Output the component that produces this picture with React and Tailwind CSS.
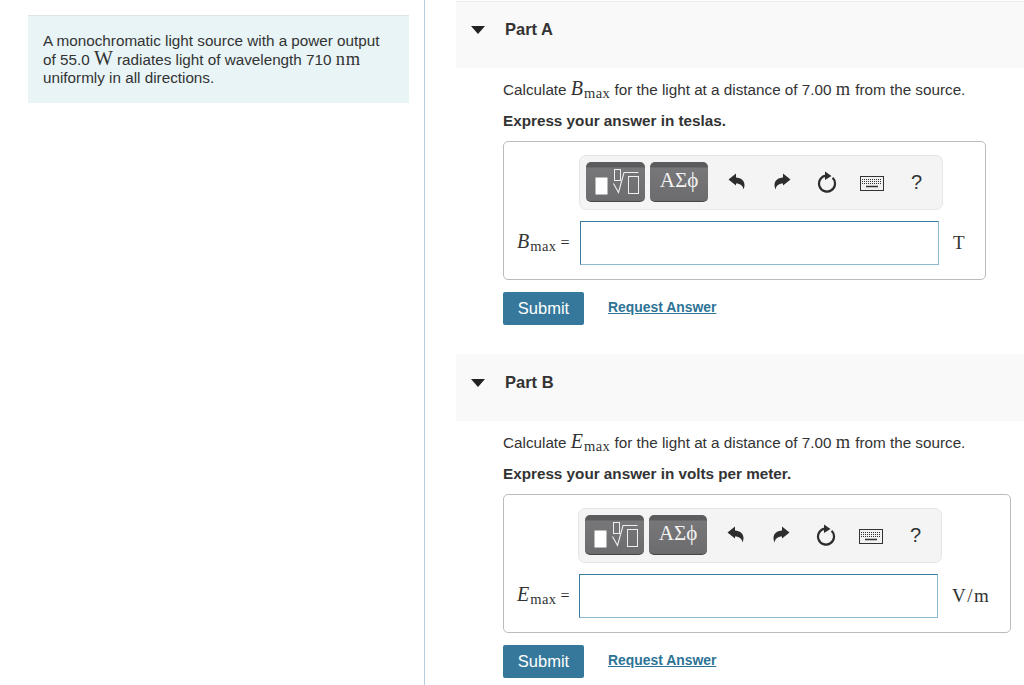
const sans = 'font-["Liberation_Sans",Arial,sans-serif]'
const serif = 'font-["Liberation_Serif",serif]'
const buttonBg = 'bg-[linear-gradient(#5c5c5e_0,#5c5c5e_5px,#77777a_6px,#6c6c6e_100%)]'

function MathVar({ letter }) {
  return (
    <span className={`${serif} whitespace-nowrap`}>
      <span className="italic text-[20px] leading-none">{letter}</span>
      <span className="text-[14.5px] leading-none tracking-[0.4px] relative top-[3px] ml-[1px]">max</span>
    </span>
  )
}

function Unit({ children }) {
  return <span className={`${serif} text-[18.5px] leading-[12px] tracking-[0.8px]`}>{children}</span>
}

function TemplatesButton() {
  return (
    <div className={`w-[59px] h-10 rounded-[5px] border-b border-[#444] ${buttonBg} flex items-center justify-center`}>
      <svg width="52" height="34" viewBox="0 0 52 34" fill="none">
        <rect x="5.5" y="12.5" width="12" height="17" fill="#fff" />
        <rect x="24.5" y="4.5" width="6" height="11" stroke="#eee" />
        <path d="M23.5 18.5l5 9 5.500-20h14.500" stroke="#eee" strokeWidth="1.100" />
        <rect x="38.5" y="11.5" width="10" height="17" stroke="#eee" />
      </svg>
    </div>
  )
}

function SymbolsButton() {
  return (
    <div className={`w-[58px] h-10 rounded-[5px] border-b border-[#444] ${buttonBg} flex items-center justify-center pb-[2px] text-[#f2f2f2] text-[21px] ${serif}`}>
      ΑΣϕ
    </div>
  )
}

function UndoIcon({ flip }) {
  return (
    <svg width="18" height="18" viewBox="0 0 18 18" className={flip ? '-scale-x-100' : ''}>
      <path d="M.5 6.500 8 .5v4c5 .3 8.500 3 8.500 7.500 0 1.500-.5 3.200-1 4.500-.5-3.500-3-6-7.500-6v2z" fill="#2d2d2d" />
    </svg>
  )
}

function ResetIcon() {
  return (
    <svg width="20" height="22" viewBox="0 0 20 22" fill="none">
      <path d="M15.600 6.800A8 8 0 1 1 9 4.600" stroke="#2d2d2d" strokeWidth="2.200" />
      <path d="M8 .5 14.500 5 8 9z" fill="#2d2d2d" />
    </svg>
  )
}

function KeyboardIcon() {
  return (
    <svg width="24" height="15" viewBox="0 0 24 15" fill="none">
      <rect x=".5" y=".5" width="23" height="14" stroke="#333" fill="#f2f2f2" />
      <path d="M2 3.500h20M2 5.500h20M2 7.500h20" stroke="#333" strokeDasharray="1 1" />
      <path d="M6 10.500h12" stroke="#333" strokeWidth="1.500" />
    </svg>
  )
}

function Toolbar() {
  return (
    <div className="w-[364px] h-[55px] rounded-[7px] bg-[#f4f4f4] border border-[#e6e6e6] flex items-center pl-[6px]">
      <div className="flex gap-[5px] mb-[1px]">
        <TemplatesButton />
        <SymbolsButton />
      </div>
      <div className="grid grid-cols-[repeat(5,45px)] justify-items-center items-center ml-[6px] mb-[1px]">
        <UndoIcon />
        <UndoIcon flip />
        <ResetIcon />
        <div className="mt-[2px]"><KeyboardIcon /></div>
        <span className={`${sans} text-[20px] text-[#333]`}>?</span>
      </div>
    </div>
  )
}

function Part({ name, letter, unit, unitText, boxWidth, inset, labelWidth, header }) {
  return (
    <section>
      <div className={`h-[67px] bg-[#f9f9f9] flex items-start pt-[18px] pl-[15px] ${header}`}>
        <svg width="14" height="8" viewBox="0 0 14 8" className="mt-[7px]">
          <path d="M0 0h14L7 8z" fill="#222" />
        </svg>
        <h2 className="ml-[20px] text-[16.5px] leading-[20px] font-bold text-[#333]">{name}</h2>
      </div>

      <div className="pl-[47px]">
        <p className="mt-[10px] h-[24px] text-[#333] text-[15.25px] leading-[24px] whitespace-nowrap">
          Calculate <MathVar letter={letter} /> for the light at a distance of 7.00 <Unit>m</Unit> from the source.
        </p>
        <p className="mt-[9px] text-[15.25px] leading-[20px] font-bold text-[#333]">{unitText}</p>

        <div className={`mt-[10px] h-[139px] rounded-[5px] border border-[#bbb] pt-[13px] ${boxWidth}`}>
          <div className={inset}>
            <Toolbar />
          </div>
          <div className="flex items-center mt-[11px]">
            <div className={`${labelWidth} pl-[13px] text-[#333] whitespace-nowrap text-[16px] ${serif}`}>
              <MathVar letter={letter} /> =
            </div>
            <div className="w-[359px] h-[44px] border border-[#3b7da0] border-b-[#8fb9cf] border-r-[#8fb9cf] bg-white" />
            <div className={`ml-[14px] text-[#333] ${serif} text-[19px] tracking-[1.5px]`}>{unit}</div>
          </div>
        </div>

        <div className="flex items-center mt-[12px]">
          <button className="w-[81px] h-[33px] rounded-[2px] bg-[#36789b] text-white text-[16.5px]">Submit</button>
          <a className="ml-[24px] -mt-[2px] text-[13.9px] font-bold text-[#2d7396] underline">Request Answer</a>
        </div>
      </div>
    </section>
  )
}

export default function App() {
  return (
    <div className={`${sans} w-[1024px] h-[685px] overflow-hidden bg-white flex`}>
      <aside className="w-[425px] shrink-0 border-r border-[#b9cde0] pl-[28px] pr-[15px] pt-[15px]">
        <div className="h-[88px] bg-[#e8f4f6] border-t border-[#dde5e8] pl-[15px] pr-[20px] pt-[16px] text-[15.25px] leading-[18.5px] text-[#333]">
          A monochromatic light source with a power output of 55.0 <span className={`${serif} text-[20px] leading-[12px]`}>W</span> radiates light of wavelength 710 <Unit>nm</Unit> uniformly in all directions.
        </div>
      </aside>

      <main className="flex-1 pl-[31px] pt-[1px] flex flex-col">
        <Part name="Part A" letter="B" unit="T" unitText="Express your answer in teslas." boxWidth="w-[483px]" inset="ml-[75px]" labelWidth="w-[76px]" header="shadow-[inset_0_1px_0_#eee]" />
        <div className="h-[29px] shrink-0" />
        <Part name="Part B" letter="E" unit="V/m" unitText="Express your answer in volts per meter." boxWidth="w-[508px]" inset="ml-[74px]" labelWidth="w-[75px]" header="" />
      </main>
    </div>
  )
}
